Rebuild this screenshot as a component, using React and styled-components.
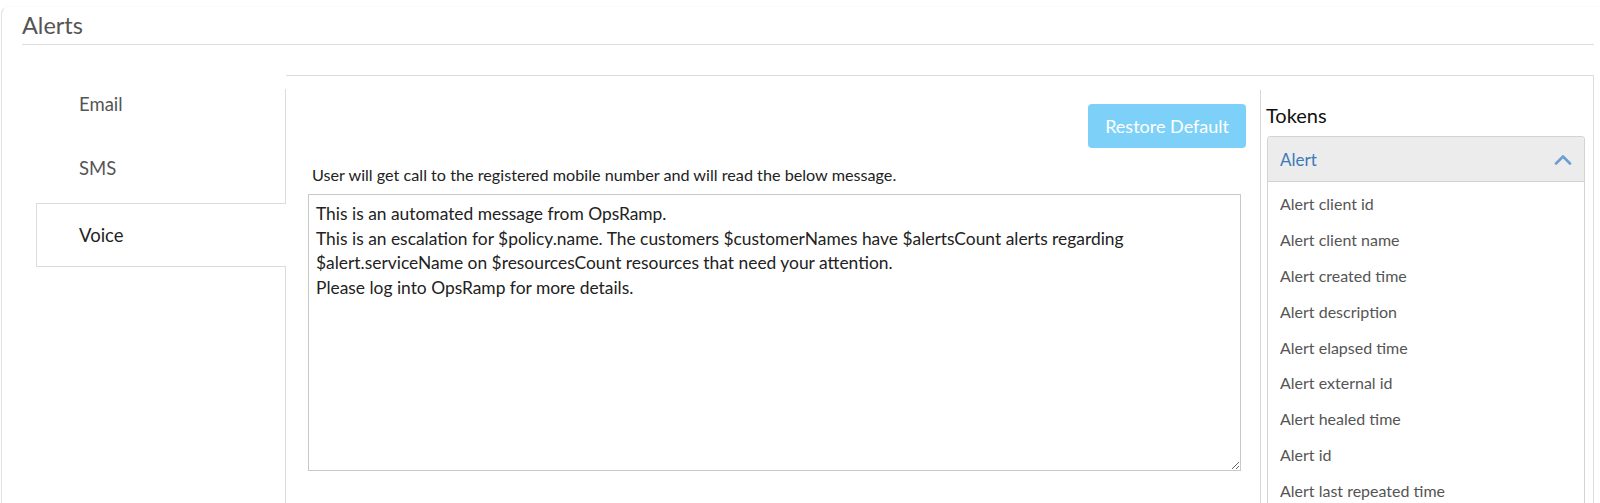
import React from 'react';
import styled, { createGlobalStyle } from 'styled-components';

// --- Global ---

const GlobalStyle = createGlobalStyle`
  html, body {
    margin: 0;
    padding: 0;
    background: #ffffff;
    overflow: hidden;
  }
  body {
    font-family: Lato, 'Open Sans', 'Liberation Sans', sans-serif;
    color: #222;
  }
`;

// --- Page frame ---

const Page = styled.div`
  padding: 6px 0 0 1px;
`;

const Card = styled.section`
  width: 1614px;
  height: 520px;
  box-sizing: border-box;
  border: 1px solid #e0e0e0;
  border-top-color: #fafafa;
  border-radius: 8px;
  padding: 0 20px;
`;

const Header = styled.header`
  height: 37px;
  display: flex;
  align-items: flex-end;
  border-bottom: 1px solid #dedede;
`;

const Title = styled.h2`
  margin: 0 0 6px 0;
  font-size: 23.5px;
  font-weight: 400;
  color: #555;
  line-height: 26px;
`;

// --- Tabs layout ---

const Body = styled.div`
  display: flex;
  margin-top: 30px;
  padding-left: 14px;
`;

const TabList = styled.ul`
  list-style: none;
  width: 249px;
  margin: 14px 0 0 0;
  padding: 0;
  border-right: 1px solid #dcdcdc;
  min-height: 420px;
`;

const Tab = styled.li`
  height: 64px;
  box-sizing: border-box;
  display: flex;
  align-items: center;
  padding-left: 42px;
  font-size: 18.5px;
  color: ${(p) => (p.$active ? '#1f1f1f' : '#555')};
  background: #fff;
  border: 1px solid ${(p) => (p.$active ? '#dcdcdc' : 'transparent')};
  border-right: none;
  margin-right: ${(p) => (p.$active ? '-1px' : '0')};
  &:first-child {
    margin-top: -17px;
  }
  &:last-child {
    margin-top: 3px;
  }
`;

const Panel = styled.div`
  flex: 1;
  display: flex;
  border-top: 1px solid #dcdcdc;
  border-right: 1px solid #dcdcdc;
  padding-top: 14px;
  min-height: 420px;
`;

// --- Editor ---

const Editor = styled.div`
  flex: 1;
  padding: 14px 14px 0 22px;
  display: flex;
  flex-direction: column;
`;

const ButtonRow = styled.div`
  display: flex;
  justify-content: flex-end;
`;

const RestoreButton = styled.button`
  height: 44px;
  padding: 0 17px;
  border: none;
  border-radius: 4px;
  background: #7dd1f8;
  color: #fff;
  font-family: inherit;
  font-size: 18px;
  cursor: not-allowed;
`;

const Hint = styled.p`
  margin: 17px 0 9px 4px;
  font-size: 16.2px;
  line-height: 20px;
  color: #222;
`;

const MessageBox = styled.textarea`
  width: calc(100% - 5px);
  height: 277px;
  box-sizing: border-box;
  border: 1px solid #c9c9c9;
  padding: 7px 7px;
  font-family: inherit;
  font-size: 17.4px;
  line-height: 24.5px;
  color: #222;
  resize: vertical;
  outline: none;
`;

// --- Tokens ---

const TokenPane = styled.aside`
  width: 318px;
  border-left: 1px solid #d6d6d6;
  padding: 0 8px 0 6px;
`;

const TokenTitle = styled.h3`
  margin: 13px 0 9px -1px;
  font-size: 20px;
  line-height: 24px;
  font-weight: 400;
  color: #111;
`;

const Accordion = styled.div`
  border: 1px solid #d3d3d3;
  border-bottom: none;
  border-radius: 4px 4px 0 0;
`;

const AccordionHead = styled.div`
  height: 44px;
  display: flex;
  align-items: center;
  justify-content: space-between;
  padding: 0 12px;
  background: #ececec;
  border-bottom: 1px solid #d3d3d3;
  border-radius: 4px 4px 0 0;
  font-size: 17px;
  color: #3b79b9;
`;

const TokenList = styled.ul`
  list-style: none;
  margin: 0;
  padding: 4px 0 0 0;
`;

const TokenItem = styled.li`
  height: 35.8px;
  display: flex;
  align-items: center;
  padding-left: 12px;
  font-size: 16px;
  color: #555;
`;

const Chevron = () => (
  <svg width="18" height="11" viewBox="0 0 18 11" fill="none">
    <path d="M2 9.5 L9 2.5 L16 9.5" stroke="#6d9fd3" strokeWidth="2.6" strokeLinecap="round" strokeLinejoin="round" />
  </svg>
);

// --- Data ---

const tabs = [
  { label: 'Email' },
  { label: 'SMS' },
  { label: 'Voice', active: true },
];

const tokens = [
  'Alert client id',
  'Alert client name',
  'Alert created time',
  'Alert description',
  'Alert elapsed time',
  'Alert external id',
  'Alert healed time',
  'Alert id',
  'Alert last repeated time',
  'Alert metric',
];

const message = `This is an automated message from OpsRamp.
This is an escalation for $policy.name. The customers $customerNames have $alertsCount alerts regarding
$alert.serviceName on $resourcesCount resources that need your attention.
Please log into OpsRamp for more details.`;

// --- Component ---

const App = () => {
  return (
    <Page>
      <GlobalStyle />
      <Card>
        <Header>
          <Title>Alerts</Title>
        </Header>
        <Body>
          <TabList>
            {tabs.map((t) => (
              <Tab key={t.label} $active={t.active}>
                {t.label}
              </Tab>
            ))}
          </TabList>
          <Panel>
            <Editor>
              <ButtonRow>
                <RestoreButton disabled>Restore Default</RestoreButton>
              </ButtonRow>
              <Hint>User will get call to the registered mobile number and will read the below message.</Hint>
              <MessageBox defaultValue={message} spellCheck={false} />
            </Editor>
            <TokenPane>
              <TokenTitle>Tokens</TokenTitle>
              <Accordion>
                <AccordionHead>
                  <span>Alert</span>
                  <Chevron />
                </AccordionHead>
                <TokenList>
                  {tokens.map((t) => (
                    <TokenItem key={t}>{t}</TokenItem>
                  ))}
                </TokenList>
              </Accordion>
            </TokenPane>
          </Panel>
        </Body>
      </Card>
    </Page>
  );
};

export default App;
